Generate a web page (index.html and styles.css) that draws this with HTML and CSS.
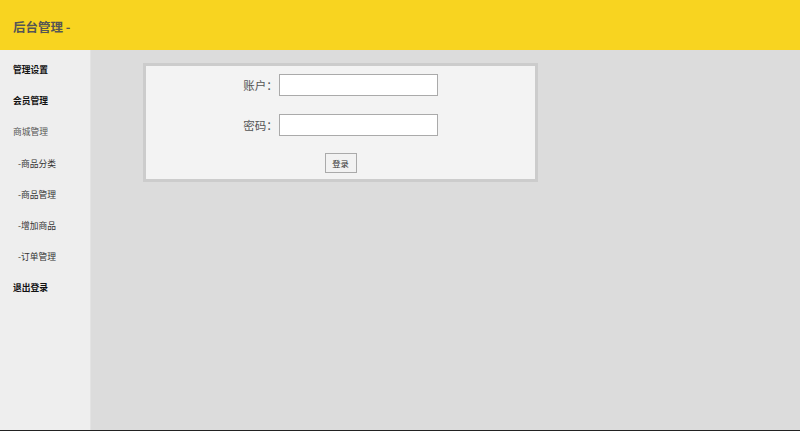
FILE: index.html
```html
<!DOCTYPE html>
<html lang="zh-CN">
<head>
<meta charset="utf-8">
<title>后台管理</title>
<link rel="stylesheet" href="styles.css">
</head>
<body>
<div class="page">
  <header class="topbar">
    <h1 class="title">后台管理 -</h1>
  </header>
  <div class="body">
    <nav class="sidebar">
      <ul class="menu">
        <li class="item strong">管理设置</li>
        <li class="item strong">会员管理</li>
        <li class="item muted">商城管理</li>
        <li class="item sub">-商品分类</li>
        <li class="item sub">-商品管理</li>
        <li class="item sub">-增加商品</li>
        <li class="item sub">-订单管理</li>
        <li class="item strong">退出登录</li>
      </ul>
    </nav>
    <main class="main">
      <form class="login">
        <div class="row">
          <label class="label">账户：</label>
          <input class="field" type="text">
        </div>
        <div class="row">
          <label class="label">密码：</label>
          <input class="field" type="password">
        </div>
        <div class="actions">
          <button class="btn" type="button">登录</button>
        </div>
      </form>
    </main>
  </div>
  <div class="baseline"></div>
</div>
</body>
</html>
```

FILE: styles.css
```css
* { box-sizing: border-box; }
html, body { margin: 0; padding: 0; }
body {
  font-family: "Noto Sans CJK SC", "Noto Sans", "Liberation Sans", sans-serif;
  background: #dcdcdc;
  color: #333;
}
.page {
  width: 800px;
  height: 431px;
  display: flex;
  flex-direction: column;
  overflow: hidden;
}
.topbar {
  height: 50px;
  flex: 0 0 50px;
  background: #f8d420;
  display: flex;
  align-items: center;
  padding: 2px 0 0 13px;
}
.title {
  margin: 0;
  font-size: 12.5px;
  font-weight: bold;
  color: #555;
}
.body {
  flex: 1;
  display: flex;
  min-height: 0;
}
.sidebar {
  width: 91px;
  flex: 0 0 91px;
  background: #eeeeee;
  border-right: 1px solid #e3e3e3;
}
.menu {
  list-style: none;
  margin: 0;
  padding: 4px 0 0 0;
}
.item {
  height: 31.2px;
  line-height: 31.2px;
  font-size: 8.75px;
  padding-left: 13px;
  white-space: nowrap;
}
.strong { font-weight: bold; color: #111; }
.muted { color: #555; }
.sub { color: #333; padding-left: 18px; }
.main {
  flex: 1;
  padding: 13px 0 0 52px;
}
.login {
  width: 395px;
  border: 3px solid #cccccc;
  background: #f3f3f3;
  display: flex;
  flex-direction: column;
  align-items: center;
  padding: 8px 0 6px 0;
}
.row {
  display: flex;
  align-items: center;
  margin-bottom: 18px;
}
.label {
  font-size: 11.5px;
  color: #555;
  margin-right: 1px;
}
.field {
  width: 159px;
  height: 22px;
  border: 1px solid #aaaaaa;
  background: #fff;
  margin: 0;
  padding: 0 3px;
}
.actions {
  margin-top: -1px;
  display: flex;
  justify-content: center;
}
.btn {
  width: 32px;
  height: 20px;
  font-family: inherit;
  font-size: 8.3px;
  color: #333;
  background: #f2f2f2;
  border: 1px solid #aaaaaa;
  padding: 0;
  margin: 0;
}
.baseline {
  height: 1px;
  flex: 0 0 1px;
  background: #222;
}
```
